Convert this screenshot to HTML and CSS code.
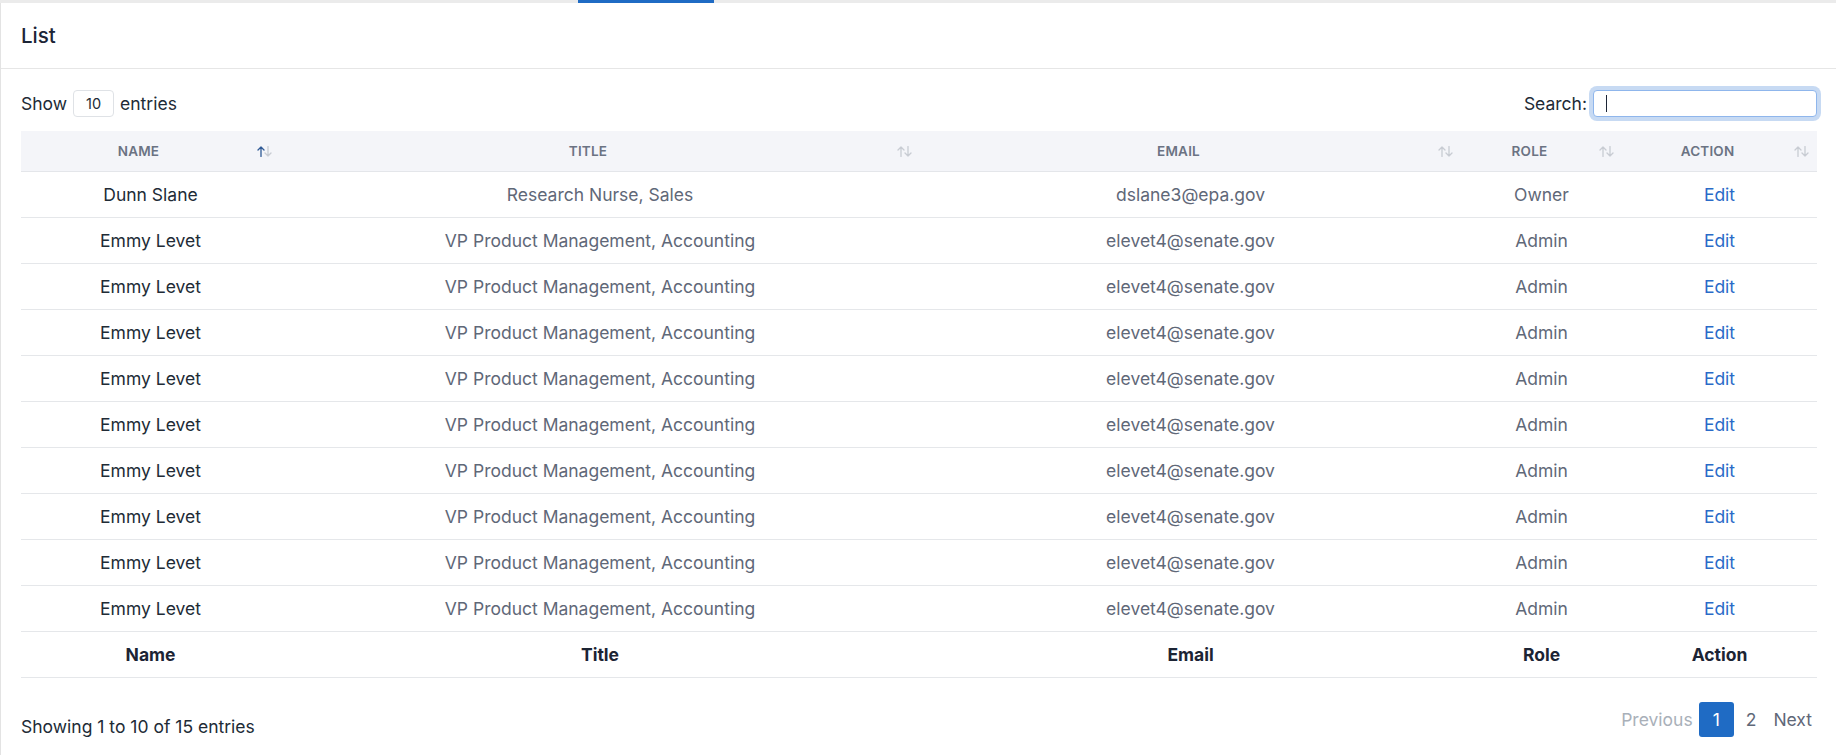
FILE: index.html
```html
<!DOCTYPE html>
<html lang="en">
<head>
<meta charset="utf-8">
<title>List</title>
<link rel="stylesheet" href="styles.css">
</head>
<body>
<div class="tabs"><span class="tab-indicator"></span></div>
<div class="card">
  <div class="card-header">List</div>
  <div class="card-body">
    <div class="dt-top">
      <label class="dt-length">Show <span class="select">10</span> entries</label>
      <label class="dt-search">Search: <span class="search-wrap"><input class="search-input" type="text"><span class="caret"></span></span></label>
    </div>
    <table class="dt">
      <colgroup>
        <col class="c-name"><col class="c-title"><col class="c-email"><col class="c-role"><col class="c-action">
      </colgroup>
      <thead>
        <tr>
          <th>NAME<svg class="sort active" viewBox="0 0 15 11" width="15" height="11"><path class="up" d="M4 10.5V1M1 4l3-3 3 3"/><path class="down" d="M11 0.5V10M8 7l3 3 3-3"/></svg></th>
          <th>TITLE<svg class="sort" viewBox="0 0 15 11" width="15" height="11"><path class="up" d="M4 10.5V1M1 4l3-3 3 3"/><path class="down" d="M11 0.5V10M8 7l3 3 3-3"/></svg></th>
          <th>EMAIL<svg class="sort" viewBox="0 0 15 11" width="15" height="11"><path class="up" d="M4 10.5V1M1 4l3-3 3 3"/><path class="down" d="M11 0.5V10M8 7l3 3 3-3"/></svg></th>
          <th>ROLE<svg class="sort" viewBox="0 0 15 11" width="15" height="11"><path class="up" d="M4 10.5V1M1 4l3-3 3 3"/><path class="down" d="M11 0.5V10M8 7l3 3 3-3"/></svg></th>
          <th>ACTION<svg class="sort" viewBox="0 0 15 11" width="15" height="11"><path class="up" d="M4 10.5V1M1 4l3-3 3 3"/><path class="down" d="M11 0.5V10M8 7l3 3 3-3"/></svg></th>
        </tr>
      </thead>
      <tbody>
        <tr><td class="name">Dunn Slane</td><td>Research Nurse, Sales</td><td>dslane3@epa.gov</td><td>Owner</td><td><a class="edit" href="#">Edit</a></td></tr>
        <tr><td class="name">Emmy Levet</td><td>VP Product Management, Accounting</td><td>elevet4@senate.gov</td><td>Admin</td><td><a class="edit" href="#">Edit</a></td></tr>
        <tr><td class="name">Emmy Levet</td><td>VP Product Management, Accounting</td><td>elevet4@senate.gov</td><td>Admin</td><td><a class="edit" href="#">Edit</a></td></tr>
        <tr><td class="name">Emmy Levet</td><td>VP Product Management, Accounting</td><td>elevet4@senate.gov</td><td>Admin</td><td><a class="edit" href="#">Edit</a></td></tr>
        <tr><td class="name">Emmy Levet</td><td>VP Product Management, Accounting</td><td>elevet4@senate.gov</td><td>Admin</td><td><a class="edit" href="#">Edit</a></td></tr>
        <tr><td class="name">Emmy Levet</td><td>VP Product Management, Accounting</td><td>elevet4@senate.gov</td><td>Admin</td><td><a class="edit" href="#">Edit</a></td></tr>
        <tr><td class="name">Emmy Levet</td><td>VP Product Management, Accounting</td><td>elevet4@senate.gov</td><td>Admin</td><td><a class="edit" href="#">Edit</a></td></tr>
        <tr><td class="name">Emmy Levet</td><td>VP Product Management, Accounting</td><td>elevet4@senate.gov</td><td>Admin</td><td><a class="edit" href="#">Edit</a></td></tr>
        <tr><td class="name">Emmy Levet</td><td>VP Product Management, Accounting</td><td>elevet4@senate.gov</td><td>Admin</td><td><a class="edit" href="#">Edit</a></td></tr>
        <tr><td class="name">Emmy Levet</td><td>VP Product Management, Accounting</td><td>elevet4@senate.gov</td><td>Admin</td><td><a class="edit" href="#">Edit</a></td></tr>
      </tbody>
      <tfoot>
        <tr><th>Name</th><th>Title</th><th>Email</th><th>Role</th><th>Action</th></tr>
      </tfoot>
    </table>
    <div class="dt-bottom">
      <div class="dt-info">Showing 1 to 10 of 15 entries</div>
      <div class="pagination">
        <span class="pg prev">Previous</span>
        <span class="pg current">1</span>
        <span class="pg num">2</span>
        <span class="pg next">Next</span>
      </div>
    </div>
  </div>
</div>
</body>
</html>
```
FILE: styles.css
```css
html, body {
  margin: 0;
  padding: 0;
}
body {
  background: #ffffff;
  font-family: Inter, "Noto Sans", "Liberation Sans", sans-serif;
  font-size: 17.5px;
  color: #212b36;
  overflow: hidden;
}
.tabs {
  height: 3px;
  background: #ebebeb;
  position: relative;
}
.tab-indicator {
  position: absolute;
  left: 578px;
  top: 0;
  width: 136px;
  height: 3px;
  background: #1f6bc4;
}
.card {
  background: #fff;
  border-left: 1px solid #e3e3e3;
}
.card-header {
  height: 66px;
  box-sizing: border-box;
  padding: 0 20px;
  display: flex;
  align-items: center;
  border-bottom: 1px solid #e6e6e6;
  font-size: 20.5px;
  font-weight: 500;
  color: #1c2536;
}
.card-body {
  padding: 15px 19px 20px 20px;
}
.dt-top {
  display: flex;
  justify-content: space-between;
  align-items: center;
  height: 38px;
}
.dt-length, .dt-search {
  display: flex;
  align-items: center;
  color: #212b36;
}
.select {
  display: inline-flex;
  align-items: center;
  justify-content: center;
  width: 41px;
  height: 27px;
  box-sizing: border-box;
  border: 1px solid #dfe2e6;
  border-radius: 4px;
  margin: 0 6px 0 6px;
  font-size: 14.5px;
  color: #212b36;
}
.search-wrap {
  position: relative;
  display: inline-block;
  margin-left: 6px;
}
.search-input {
  display: block;
  width: 224px;
  height: 27px;
  box-sizing: border-box;
  border: 1px solid #8fb6ec;
  border-radius: 4px;
  box-shadow: 0 0 0 4px #c7daf3;
  outline: none;
  margin: 0;
  padding: 0 10px;
  font-family: inherit;
  font-size: 17.5px;
}
.caret {
  position: absolute;
  left: 13px;
  top: 5px;
  width: 1px;
  height: 17px;
  background: #1c2536;
}
.dt {
  width: 100%;
  table-layout: fixed;
  border-collapse: collapse;
  margin-top: 9px;
}
.c-name { width: 259px; }
.c-title { width: 640px; }
.c-email { width: 541px; }
.c-role { width: 161px; }
.c-action { width: 195px; }
.dt thead th {
  position: relative;
  height: 40px;
  padding: 0 32px 0 8px;
  background: #f4f5f9;
  border-bottom: 1px solid #e4e6ea;
  font-size: 13.5px;
  font-weight: 600;
  color: #6b7383;
  letter-spacing: 0.2px;
  text-align: center;
}
.sort {
  position: absolute;
  right: 8px;
  top: 15px;
  fill: none;
  stroke-width: 1.3;
  stroke-linecap: round;
  stroke-linejoin: round;
}
.sort .up, .sort .down { stroke: #c8ccd3; }
.sort.active .up { stroke: #2f5a96; }
.dt tbody td {
  height: 45px;
  padding: 0;
  text-align: center;
  border-bottom: 1px solid #e5e7ea;
  color: #5f6878;
}
.dt tbody td.name { color: #212b36; }
.edit {
  color: #2a6bc8;
  text-decoration: none;
}
.dt tfoot th {
  height: 45px;
  padding: 0;
  text-align: center;
  font-weight: 700;
  color: #1c2434;
  border-bottom: 1px solid #e5e7ea;
}
.dt-bottom {
  display: flex;
  justify-content: space-between;
  align-items: flex-start;
  margin-top: 24px;
}
.dt-info {
  padding-top: 14px;
  color: #212b36;
}
.pagination {
  display: flex;
  align-items: center;
  margin-right: 5px;
}
.pg {
  display: inline-flex;
  align-items: center;
  justify-content: center;
  height: 35px;
  padding: 0;
  color: #5f6878;
}
.pg.prev { color: #a9b0b9; padding-right: 6px; }
.pg.num { padding: 0 12px; }
.pg.next { padding-left: 5px; }
.pg.current {
  width: 35px;
  box-sizing: border-box;
  background: #1f6bc4;
  color: #fff;
  border-radius: 3px;
}
```
